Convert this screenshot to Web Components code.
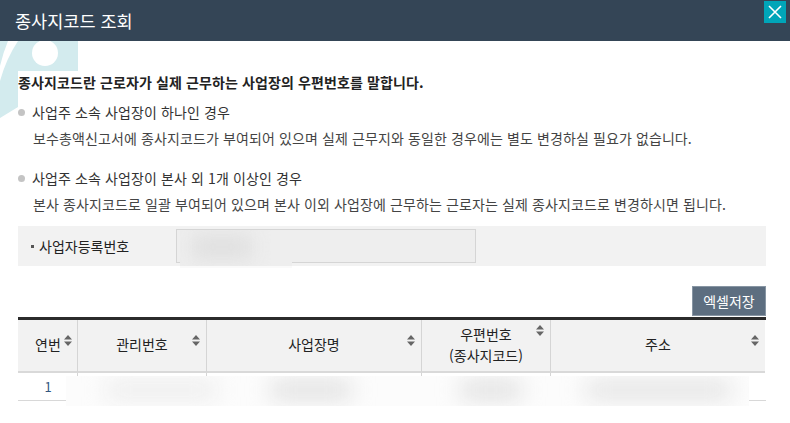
<!DOCTYPE html>
<html lang="ko">
<head>
<meta charset="utf-8">
<title>종사지코드 조회</title>
<style>
  html, body { margin: 0; background: #fff; }
  body { font-family: "Noto Sans CJK KR", "Noto Sans", sans-serif; color: #222; overflow: hidden; }
</style>
</head>
<body>
<zip-modal heading="종사지코드 조회">
  <p class="lead" slot="lead">종사지코드란 근로자가 실제 근무하는 사업장의 우편번호를 말합니다.</p>
  <zip-note slot="notes" title-text="사업주 소속 사업장이 하나인 경우">보수총액신고서에 종사지코드가 부여되어 있으며 실제 근무지와 동일한 경우에는 별도 변경하실 필요가 없습니다.</zip-note>
  <zip-note slot="notes" title-text="사업주 소속 사업장이 본사 외 1개 이상인 경우">본사 종사지코드로 일괄 부여되어 있으며 본사 이외 사업장에 근무하는 근로자는 실제 종사지코드로 변경하시면 됩니다.</zip-note>
  <zip-search slot="search" label="사업자등록번호"></zip-search>
  <zip-grid slot="grid"></zip-grid>
</zip-modal>

<script>
class ZipModal extends HTMLElement {
  constructor() {
    super();
    this.attachShadow({ mode: 'open' });
    this.shadowRoot.innerHTML = `
      <style>
        :host { display: block; position: relative; width: 790px; height: 423px; overflow: hidden; background: #fff; }
        .bar { height: 41px; background: #344556; color: #fff; display: flex; align-items: center; justify-content: space-between; padding: 0 4px 0 15px; box-sizing: border-box; }
        h1 { margin: 0; font-size: 17.5px; font-weight: 400; line-height: 41px; }
        button { align-self: flex-start; margin-top: 1px; width: 22px; height: 22px; padding: 0; border: 0; background: #00a5b8; display: flex; align-items: center; justify-content: center; }
        .mark { position: absolute; left: 0; top: 41px; display: block; }
        .body { margin: 30px 24px 0 18px; }
        ::slotted(.lead) { margin: 0; font-size: 14px; letter-spacing: .11px; font-weight: 700; line-height: 22px; color: #222; white-space: nowrap; }
        .notes { display: flex; flex-direction: column; gap: 14px; margin-top: 6px; }
        .search { margin-top: 9px; }
        .grid { margin-top: 20px; }
      </style>
      <div class="bar">
        <h1>${this.getAttribute('heading')}</h1>
        <button aria-label="닫기"><svg width="14" height="14" viewBox="0 0 14 14"><path d="M1 1l12 12M13 1L1 13" stroke="#fff" stroke-width="1.6" fill="none"/></svg></button>
      </div>
      <svg class="mark" width="80" height="82" viewBox="0 0 80 82">
        <path d="M0 0H8Q3 12 0 25Z" fill="#d3ebee"/>
        <path d="M18 0H78V30H18V66L0 77V40Q6 18 18 0Z" fill="#d3ebee"/>
        <circle cx="45" cy="12" r="13" fill="#fff"/>
      </svg>
      <div class="body">
        <slot name="lead"></slot>
        <div class="notes"><slot name="notes"></slot></div>
        <div class="search"><slot name="search"></slot></div>
        <div class="grid"><slot name="grid"></slot></div>
      </div>
    `;
  }
}

class ZipNote extends HTMLElement {
  constructor() {
    super();
    this.attachShadow({ mode: 'open' });
    this.shadowRoot.innerHTML = `
      <style>
        :host { display: block; font-size: 14px; letter-spacing: .11px; color: #444; }
        .title { display: flex; align-items: center; gap: 7px; line-height: 26px; color: #333; }
        .title i { width: 7px; height: 7px; border-radius: 50%; background: #c4c4c4; }
        .text { padding-left: 15px; line-height: 26px; white-space: nowrap; }
      </style>
      <div class="title"><i></i><span>${this.getAttribute('title-text')}</span></div>
      <div class="text"><slot></slot></div>
    `;
  }
}

class ZipSearch extends HTMLElement {
  constructor() {
    super();
    this.attachShadow({ mode: 'open' });
    this.shadowRoot.innerHTML = `
      <style>
        :host { display: block; }
        .box { display: flex; align-items: center; height: 40px; background: #f2f2f2; padding-left: 13px; font-size: 14px; color: #222; }
        .box i { width: 3px; height: 3px; background: #555; margin-right: 5px; }
        label { width: 137px; }
        .input { position: relative; width: 300px; height: 34px; box-sizing: border-box; border: 1px solid #d5d5d5; background: #eee; }
        .smudge { position: absolute; left: 3px; top: 0; width: 112px; height: 38px; background: #eeeeee; overflow: hidden; }
        .smudge::before { content: ""; position: absolute; left: 12px; top: 6px; width: 60px; height: 22px; background: #dedede; filter: blur(10px); }
        .smudge::after { content: ""; position: absolute; left: 0; right: 0; top: 36px; height: 2px; background: #fafafa; }
      </style>
      <div class="box">
        <i></i><label>${this.getAttribute('label')}</label>
        <div class="input"><div class="smudge"></div></div>
      </div>
    `;
  }
}

class ZipGrid extends HTMLElement {
  constructor() {
    super();
    this.attachShadow({ mode: 'open' });
    const sort = `<svg class="sort" width="8" height="11" viewBox="0 0 8 11"><path d="M4 0L8 4.5H0zM4 11L0 6.5H8z" fill="#666"/></svg>`;
    this.shadowRoot.innerHTML = `
      <style>
        :host { display: block; }
        .tools { display: flex; justify-content: flex-end; }
        button { width: 74px; height: 30px; border: 1px solid #8795a3; background: #5d6e80; color: #fff; font: 400 14px "Noto Sans CJK KR", "Noto Sans", sans-serif; padding: 0; }
        .table { position: relative; margin-top: 1px; border-top: 3px solid #2b2b2b; font-size: 14px; }
        .row { display: grid; grid-template-columns: 60px 129px 215px 129px 214px; }
        .th { position: relative; height: 53px; box-sizing: border-box; background: #f2f2f2; border-bottom: 2px solid #d9d9d9; border-right: 1px solid #d5d5d5; display: flex; align-items: center; justify-content: center; text-align: center; font-weight: 400; line-height: 21px; color: #222; padding-bottom: 2px; }
        .th:last-child { border-right: 0; }
        .th.no { justify-content: flex-start; padding-left: 17px; }
        .sort { position: absolute; right: 6px; top: 15px; }
        .th.no .sort { right: 5px; }
        .th.top .sort { top: 5px; }
        .td { height: 27px; text-align: center; line-height: 27px; color: #33577f; font-size: 13px; background: linear-gradient(#d5d5d5, #d5d5d5) right top / 1px 3px no-repeat; }
        .body { border-bottom: 1px solid #d8d8d8; }
        .blur { position: absolute; left: 48px; top: 56px; width: 683px; height: 30px; background: #fcfcfc; overflow: hidden; }
        .blur b { position: absolute; top: 5px; height: 18px; background: #e4e4e4; filter: blur(11px); }
      </style>
      <div class="tools"><button>엑셀저장</button></div>
      <div class="table">
        <div class="row">
          <div class="th no">연번${sort}</div>
          <div class="th">관리번호${sort}</div>
          <div class="th">사업장명${sort}</div>
          <div class="th top">우편번호<br>(종사지코드)${sort}</div>
          <div class="th">주소${sort}</div>
        </div>
        <div class="row body">
          <div class="td">1</div><div class="td"></div><div class="td"></div><div class="td"></div><div class="td" style="background:none"></div>
        </div>
        <div class="blur">
          <b style="left:40px;width:110px;background:#ececec"></b>
          <b style="left:205px;width:80px;background:#dedede"></b>
          <b style="left:395px;width:60px;background:#dedede"></b>
          <b style="left:520px;width:145px;background:#e2e2e2"></b>
        </div>
      </div>
    `;
  }
}

customElements.define('zip-modal', ZipModal);
customElements.define('zip-note', ZipNote);
customElements.define('zip-search', ZipSearch);
customElements.define('zip-grid', ZipGrid);
</script>
</body>
</html>
